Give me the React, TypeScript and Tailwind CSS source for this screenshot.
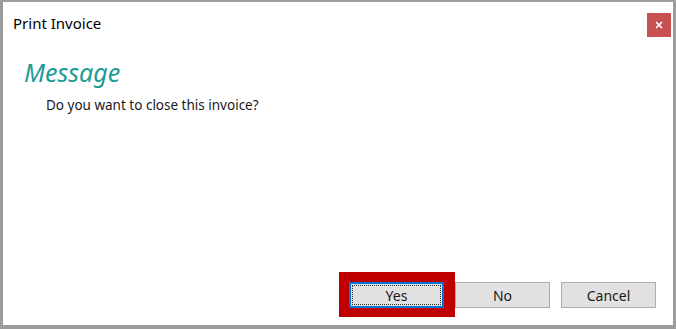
import { X } from "lucide-react"

const font = { fontFamily: '"Noto Sans", "Liberation Sans", sans-serif' }

function DialogButton({ label, focused }: { label: string; focused?: boolean }) {
  if (focused) {
    return (
      <div className="relative">
        {/* red highlight frame around the default button */}
        <div className="absolute -left-[10px] -top-[10px] -right-[11px] -bottom-[9px] bg-[#c00000]" />
        <button className="relative flex h-[26px] w-[95px] items-center justify-center border-2 border-[#0078d7] bg-[#e1e1e1] p-[1px] text-[14px] text-[#1a1a1a]">
          <span className="flex h-full w-full items-center justify-center border border-dotted border-[#333]">
            {label}
          </span>
        </button>
      </div>
    )
  }
  return (
    <button className="flex h-[26px] w-[95px] items-center justify-center border border-[#adadad] bg-[#e1e1e1] text-[14px] text-[#1a1a1a]">
      {label}
    </button>
  )
}

export default function App() {
  return (
    <div
      className="flex h-[329px] w-[676px] flex-col border-b-4 border-l-[3px] border-r-[3px] border-t-2 border-[#9c9c9c] bg-white"
      style={font}
    >
      <div className="flex items-start justify-between pl-[10px] pr-[2px] pt-[10px]">
        <div className="pt-[1px] text-[15px] leading-[20px] text-black">Print Invoice</div>
        <button className="mt-[1px] flex h-[24px] w-[24px] items-center justify-center bg-[#c75050] text-white">
          <X size={10} strokeWidth={4} />
        </button>
      </div>

      <div className="pl-[21px] pt-[21px] text-[25px] italic leading-[28px] text-[#1e9b95]">Message</div>
      <div className="pl-[43px] pt-[10px] text-[13.5px] leading-[18px] text-[#1a1a1a]">
        Do you want to close this invoice?
      </div>

      <div className="flex-1" />

      <div className="flex justify-end gap-[11px] pb-[17px] pr-[17px]">
        <DialogButton label="Yes" focused />
        <DialogButton label="No" />
        <DialogButton label="Cancel" />
      </div>
    </div>
  )
}
